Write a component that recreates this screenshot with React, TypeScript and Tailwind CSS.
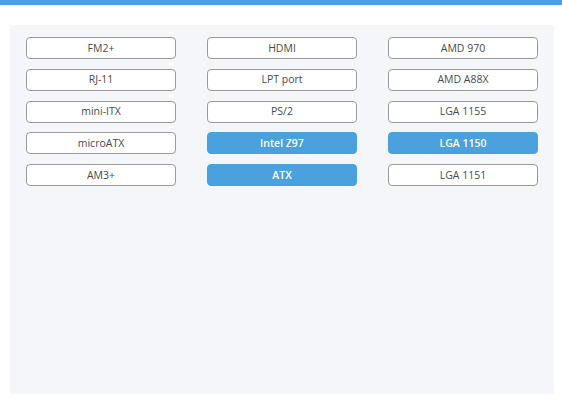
import React from 'react';

/* Rejilla de filtros: tres columnas de chips, los activos en azul. */

const ITEMS: { label: string; active?: boolean }[] = [
  { label: 'FM2+' },
  { label: 'HDMI' },
  { label: 'AMD 970' },
  { label: 'RJ-11' },
  { label: 'LPT port' },
  { label: 'AMD A88X' },
  { label: 'mini-ITX' },
  { label: 'PS/2' },
  { label: 'LGA 1155' },
  { label: 'microATX' },
  { label: 'Intel Z97', active: true },
  { label: 'LGA 1150', active: true },
  { label: 'AM3+' },
  { label: 'ATX', active: true },
  { label: 'LGA 1151' },
];

function Chip({ label, active }: { label: string; active?: boolean }) {
  return (
    <button
      className={
        active
          ? 'h-[22px] w-[150px] rounded-[4px] border border-[#4aa1dd] bg-[#4aa1dd] pt-px text-[10.5px] font-semibold text-white'
          : 'h-[22px] w-[150px] rounded-[4px] border border-[#9a9a9a] bg-white pt-px text-[10.5px] text-[#4a4a4a]'
      }
    >
      {label}
    </button>
  );
}

export default function App() {
  return (
    <div
      className="h-[408px] w-[562px] bg-white"
      style={{ fontFamily: '"Open Sans", "Noto Sans", sans-serif' }}
    >
      <div className="h-[5px] bg-[#4aa1dd]" />
      <div className="px-[10px] pt-[20px]">
        <div className="h-[369px] w-[544px] rounded-[2px] bg-[#f5f6fa] pl-[16px] pt-[12px]">
          <div className="grid grid-cols-[150px_150px_150px] gap-x-[31px] gap-y-[9.75px]">
            {ITEMS.map((it) => (
              <Chip key={it.label} label={it.label} active={it.active} />
            ))}
          </div>
        </div>
      </div>
    </div>
  );
}
